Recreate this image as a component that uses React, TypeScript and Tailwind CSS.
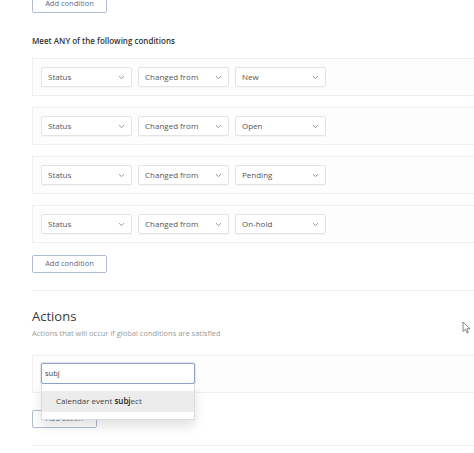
import React from 'react';

const font = { fontFamily: '"Open Sans", "Noto Sans", sans-serif' };

function Chevron() {
  return (
    <svg width="7" height="5" viewBox="0 0 7 5" className="shrink-0">
      <path d="M1 1.2 L3.5 3.6 L6 1.2" fill="none" stroke="#8a8a8a" strokeWidth="0.9" />
    </svg>
  );
}

function Select({ label }: { label: string }) {
  return (
    <div className="flex h-[20px] w-[91px] items-center justify-between rounded-[2px] border border-[#e4e4e4] bg-white pl-[6px] pr-[6px] shadow-[0_1px_1px_rgba(0,0,0,0.03)]">
      <span className="text-[8px] leading-none text-[#555]">{label}</span>
      <Chevron />
    </div>
  );
}

function OutlineButton({ label, width }: { label: string; width: string }) {
  return (
    <button className={`flex h-[18px] ${width} items-center justify-center rounded-[2px] border border-[#aebbd2] bg-white text-[7.5px] leading-none text-[#5a6886]`}>
      {label}
    </button>
  );
}

export default function App() {
  const values = ['New', 'Open', 'Pending', 'On-hold'];
  return (
    <div className="relative h-[453px] w-[474px] overflow-hidden bg-white" style={font}>
      <div className="pl-[32px]">
        <div className="mt-[-5px]">
          <OutlineButton label="Add condition" width="w-[75px]" />
        </div>

        <div className="mt-[24px] text-[8px] font-semibold leading-none text-[#333]">
          Meet ANY of the following conditions
        </div>

        <div className="mt-[13px] flex flex-col gap-[11px]">
          {values.map(v => (
            <div key={v} className="flex h-[38px] items-center gap-[6px] border-y border-l border-[#efefef] bg-[#fdfdfd] pl-[8px]">
              <Select label="Status" />
              <Select label="Changed from" />
              <Select label={v} />
            </div>
          ))}
        </div>

        <div className="mt-[12px]">
          <OutlineButton label="Add condition" width="w-[75px]" />
        </div>

        <div className="mt-[17px] h-px bg-[#f1f1f1]" />

        <div className="mt-[19px] text-[13px] leading-none text-[#3a3a3a]">Actions</div>
        <div className="mt-[7px] text-[7.5px] leading-none text-[#9a9a9a]">
          Actions that will occur if global conditions are satisfied
        </div>

        <div className="relative mt-[17px] flex h-[38px] items-center border-y border-l border-[#efefef] bg-[#fdfdfd] pl-[8px]">
          <div className="flex h-[21px] w-[154px] items-center rounded-[2px] border border-[#8ea3c8] bg-white pl-[3px] shadow-[0_0_0_1px_rgba(142,163,200,0.25)]">
            <span className="text-[7.5px] leading-none text-[#444]">subj</span>
          </div>
          <div className="absolute left-[8px] top-[28px] z-10 w-[154px] border-x border-b border-[#d6dbe4] bg-white py-[7px] shadow-[0_6px_12px_rgba(0,0,0,0.12)]">
            <div className="flex h-[21px] items-center bg-[#ececec] pl-[14px] text-[8px] leading-none text-[#444]">
              Calendar event&nbsp;<span className="font-semibold text-[#222]">subj</span>ect
            </div>
          </div>
        </div>

        <div className="mt-[17px]">
          <OutlineButton label="Add action" width="w-[65px]" />
        </div>

        <div className="mt-[17px] h-px bg-[#f1f1f1]" />
      </div>

      <svg className="absolute left-[462px] top-[321px]" width="9" height="13" viewBox="0 0 9 13">
        <path d="M1 1 L1 10.5 L3.3 8.4 L5 12 L6.4 11.3 L4.8 7.8 L8 7.8 Z" fill="#fff" stroke="#666" strokeWidth="0.8" strokeLinejoin="round" />
      </svg>
    </div>
  );
}
